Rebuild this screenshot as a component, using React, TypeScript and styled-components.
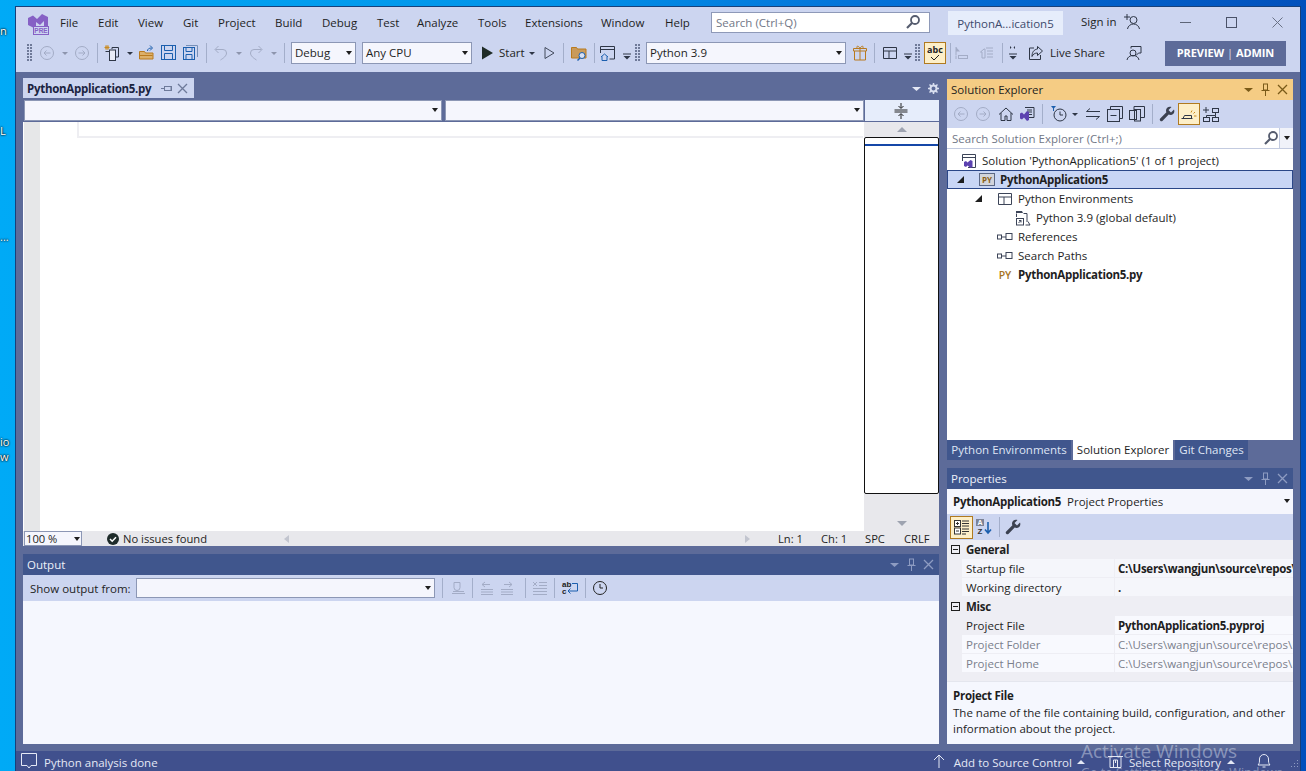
import React from "react";
import styled, { createGlobalStyle } from "styled-components";

const Global = createGlobalStyle`
  html, body { margin: 0; padding: 0; overflow: hidden; }
  body { font-family: "Open Sans", "Noto Sans", sans-serif; font-size: 11.5px; color: #1e1e1e; }
  * { box-sizing: border-box; }
  b { letter-spacing: -.28px; }
`;

const Root = styled.div`
  position: relative; width: 1306px; height: 771px; overflow: hidden;
  background: linear-gradient(90deg, #00aaf6 0%, #0094ea 40%, #0070d8 68%, #0050bc 100%);
  padding: 6px 5px 0 15px;
`;
const DesktopLabel = styled.span<{ $y: number }>`
  position: absolute; left: 0; top: ${p => p.$y}px; font-size: 11px; line-height: 13px; color: #fff;
  text-shadow: 0 0 2px #000, 0 0 2px #000;
`;
const Watermark = styled.div`
  position: absolute; left: 1081px; top: 739px; color: rgba(235, 240, 250, .42); font-size: 19px; line-height: 24px; pointer-events: none;
  white-space: nowrap;
  small { display: block; font-size: 12.5px; line-height: 18px; margin-top: 1px; }
`;
const Window = styled.div`
  height: 765px; border: 1px solid #16407a; border-bottom: none; background: #5d6b99; display: flex; flex-direction: column;
`;
const Chrome = styled.header`
  height: 65px; background: #ccd5f0; flex: none;
`;
const TitleRow = styled.div`
  height: 30px; display: flex; align-items: center; padding-left: 12px;
`;
const MenuItem = styled.span<{ $w: number }>`
  flex: none; width: ${p => p.$w}px; white-space: nowrap;
`;
const Logo = styled.svg`
  width: 21px; height: 22px; flex: none; margin-right: 11px; margin-top: 3px;
`;
const QuickSearch = styled.div`
  width: 219px; height: 21px; flex: none; background: #fff; border: 1px solid #8e99b8; display: flex; align-items: center; justify-content: space-between;
  padding: 0 8px 0 4px; color: #717786;
`;
const ProjectName = styled.div`
  margin-left: 18px; width: 115px; height: 24px; margin-top: 2px; flex: none; background: #e6edfb; color: #3d4a6c; display: flex; align-items: center; justify-content: center;
`;
const SignIn = styled.span`
  margin-left: 18px; width: 43px; flex: none; margin-top: -1px; white-space: nowrap;
`;
const WinButtons = styled.div`
  margin-left: auto; display: flex; flex: none;
`;
const WinButton = styled.div`
  width: 46px; height: 30px; display: flex; align-items: center; justify-content: center;
`;
const Toolbar = styled.div`
  height: 32px; display: flex; align-items: center; padding-left: 6px;
`;
const Slot = styled.div<{ $w: number }>`
  width: ${p => p.$w}px; flex: none; display: flex; align-items: center; height: 16px; white-space: nowrap;
`;
const IconSvg = styled.svg`
  width: 16px; height: 16px; flex: none; overflow: visible; display: block;
`;
const Sep = styled.i<{ $ml?: number }>`
  display: block; flex: none; width: 1px; height: 20px; background: #a3aeca; margin-left: ${p => p.$ml ?? 8}px;
`;
const Grip = styled.i`
  display: block; flex: none; width: 5px; height: 18px; margin-left: 5px;
  background-image: radial-gradient(circle at 1px 1px, #6f7a99 .8px, transparent 1px);
  background-size: 3px 3px;
`;
const Combo = styled.div<{ $w: number; $ml?: number; $h?: number }>`
  width: ${p => p.$w}px; height: ${p => p.$h ?? 22}px; margin-left: ${p => p.$ml ?? 0}px; flex: none; background: #f5f6fd; border: 1px solid #8c97b5;
  display: flex; align-items: center; justify-content: space-between; padding: 0 3px 1px 3px; color: #1e1e1e; white-space: nowrap;
`;
const Caret = styled.i`
  display: block; flex: none; width: 0; height: 0; border-left: 3.5px solid transparent; border-right: 3.5px solid transparent; border-top: 4px solid #1e1e1e;
`;
const ToolLabel = styled.span<{ $w: number }>`
  flex: none; width: ${p => p.$w}px; margin-top: -1px; white-space: nowrap;
`;
const ActiveTool = styled.div<{ $w?: number; $h?: number }>`
  width: ${p => p.$w ?? 22}px; height: ${p => p.$h ?? 22}px; flex: none; background: #fdefc8; border: 1px solid #b07a20; display: flex; flex-direction: column; align-items: center; justify-content: center;
  font-size: 9px; line-height: 8px; font-weight: 700; color: #222;
`;
const PreviewBadge = styled.div`
  margin-left: 23px; width: 121px; height: 25px; flex: none; background: #5d6b99; color: #fff; font-weight: 700; font-size: 11px; letter-spacing: -.1px; display: flex; align-items: center; justify-content: center; white-space: nowrap; padding-bottom: 1px;
  em { font-style: normal; font-weight: 400; padding: 0 3px; opacity: .8; }
`;

const Body = styled.main`
  flex: 1; min-height: 0; display: flex; padding: 0 7px 7px 7px; gap: 8px;
`;
const LeftColumn = styled.section`
  width: 916px; flex: none; display: flex; flex-direction: column;
`;
const TabStrip = styled.div`
  height: 28px; flex: none; display: flex; justify-content: space-between; padding-top: 6px;
`;
const DocTab = styled.div`
  width: 171px; height: 20px; background: #ccd5f0; display: flex; align-items: center; padding: 0 4px; font-weight: 700; letter-spacing: -.28px; color: #1a2340; white-space: nowrap;
  span { flex: 1; }
`;
const TabStripTools = styled.div`
  display: flex; align-items: center; height: 20px; gap: 2px; margin-right: -2px;
`;
const CombosBar = styled.div`
  height: 22px; flex: none; display: flex; background: #5d6b99;
  padding-left: 1px;
`;
const SplitButton = styled.div`
  flex: 1; height: 21px; margin-left: 1px; background: #e6edfb; display: flex; align-items: center; justify-content: center; padding-right: 2px; padding-top: 1px;
`;
const Editor = styled.div`
  height: 409px; flex: none; display: flex; background: #fff; padding-left: 1px;
`;
const Gutter = styled.div`
  width: 16px; flex: none; background: #e6e7e8;
`;
const Code = styled.div`
  flex: 1; padding-left: 37px;
`;
const CurrentLine = styled.div`
  height: 16px; margin-right: 1px; border: 2px solid #eeeef2; border-top: none; border-right: none;
`;
const MapColumn = styled.div`
  width: 75px; flex: none; background: #e8e8ec; display: flex; flex-direction: column; align-items: center;
`;
const MapArrow = styled.i<{ $up?: boolean }>`
  display: block; width: 0; height: 0; flex: none; border-left: 5px solid transparent; border-right: 5px solid transparent;
  ${p => p.$up ? "border-bottom: 5px solid #9ea3b0; margin-top: 5px;" : "border-top: 5px solid #9ea3b0; margin-top: 27px;"}
`;
const MapBox = styled.div`
  width: 75px; height: 357px; margin-top: 5px; background: #fff; border: 1px solid #111; border-radius: 2px; padding-top: 6px;
  &::before { content: ""; display: block; height: 2px; background: #1547a8; }
`;
const EditorStatus = styled.div`
  height: 15px; flex: none; background: #e8e8ec; display: flex; align-items: center; padding-left: 1px; font-size: 11.2px; white-space: nowrap;
`;
const ZoomCombo = styled.div`
  width: 58px; height: 15px; flex: none; background: #f5f6fd; border: 1px solid #8c97b5; display: flex; align-items: center; justify-content: space-between; padding: 0 1px 0 1px;
`;
const IssueIcon = styled.svg`
  width: 12px; height: 12px; margin-left: 25px; margin-right: 4px; flex: none;
`;
const ScrollTrack = styled.div`
  flex: 1; margin: 0 25px 0 74px; display: flex; justify-content: space-between; padding: 0 3px;
`;
const ScrollArrow = styled.i<{ $right?: boolean }>`
  display: block; width: 0; height: 0; border-top: 4px solid transparent; border-bottom: 4px solid transparent;
  ${p => p.$right ? "border-left: 5px solid #c2c5cf;" : "border-right: 5px solid #c2c5cf;"}
`;
const StatusCell = styled.span<{ $w: number }>`
  width: ${p => p.$w}px; flex: none;
`;
const Panel = styled.section<{ $h: number; $mt?: number }>`
  height: ${p => p.$h}px; margin-top: ${p => p.$mt ?? 0}px; flex: none; display: flex; flex-direction: column; background: #f5f7fe;
`;
const PanelTitle = styled.div<{ $active?: boolean }>`
  height: 21px; flex: none; display: flex; align-items: center; justify-content: space-between; padding: 0 3px 0 4px;
  background: ${p => p.$active ? "#f5cc84" : "#40568d"}; color: ${p => p.$active ? "#1e1e1e" : "#eef1f9"};
`;
const TitleTools = styled.div`
  display: flex; align-items: center; gap: 2px;
`;
const PanelGlyph = styled.svg`
  width: 15px; height: 15px; display: block; flex: none;
`;
const OutputBar = styled.div`
  height: 26px; flex: none; background: #ccd5f0; display: flex; align-items: center; padding-left: 7px;
`;
const OutputLabel = styled.span`
  width: 106px; flex: none; white-space: nowrap;
`;
const PanelFill = styled.div`
  flex: 1;
`;
const RightColumn = styled.section`
  width: 346px; flex: none; display: flex; flex-direction: column; padding-top: 7px;
`;
const SolutionBar = styled.div`
  height: 28px; flex: none; background: #ccd5f0; display: flex; align-items: center; padding-left: 6px;
`;
const SearchBox = styled.div`
  height: 21px; flex: none; background: #fff; border-bottom: 1px solid #c3cbe0; display: flex; align-items: center; padding: 0 0 0 5px; color: #717786; white-space: nowrap;
  span { flex: 1; }
`;
const SearchDrop = styled.div`
  width: 14px; height: 20px; flex: none; margin-left: 0; background: #f0f2f9; border-left: 1px solid #c3cbe0; display: flex; align-items: center; justify-content: center;
`;
const Tree = styled.div`
  flex: 1; background: #fff; padding-top: 2px;
`;
const TreeRow = styled.div<{ $pad: number; $selected?: boolean }>`
  height: 19px; display: flex; align-items: center; padding-left: ${p => p.$pad}px; white-space: nowrap;
  ${p => p.$selected ? "background: #c9d6f5; border: 1px solid #2b4788; margin-left: 0; padding-left: " + (p.$pad - 1) + "px;" : ""}
`;
const Expander = styled.div`
  width: 28px; flex: none; display: flex; align-items: center; padding-left: 6px;
`;
const ExpandArrow = styled.i`
  display: block; width: 0; height: 0; border-left: 7px solid transparent; border-bottom: 7px solid #1e1e1e;
`;
const TreeIcon = styled.div`
  width: 16px; height: 16px; flex: none; margin-right: 5px; display: flex; align-items: center; justify-content: center;
`;
const PyBadge = styled.span<{ $boxed?: boolean }>`
  font-size: 10.5px; line-height: 12px; font-weight: 600; color: #a8751f; letter-spacing: 0; display: block; text-align: center;
  ${p => p.$boxed ? "border: 1px solid #5c6885; background: #d2d4db; width: 16px; height: 13px; font-size: 8px; font-weight: 700; color: #8a5e14;" : ""}
`;
const TreeText = styled.span<{ $bold?: boolean }>`
  font-weight: ${p => p.$bold ? 700 : 400};
  letter-spacing: ${p => p.$bold ? "-.28px" : "0"};
  margin-top: ${p => p.$bold ? 0 : -1}px;
`;
const ToolTabs = styled.div`
  height: 20px; flex: none; display: flex; gap: 2px;
`;
const ToolTab = styled.div<{ $w: number; $active?: boolean }>`
  width: ${p => p.$w}px; flex: none; display: flex; align-items: center; justify-content: center; white-space: nowrap; padding-bottom: 2px;
  background: ${p => p.$active ? "#fff" : "#40568d"}; color: ${p => p.$active ? "#1e1e1e" : "#dfe5f5"};
`;
const PropCombo = styled.div`
  height: 25px; flex: none; background: #f5f6fd; display: flex; align-items: center; justify-content: space-between; padding: 0 3px 1px 6px; white-space: nowrap;
  b { margin-right: 6px; }
`;
const PropBar = styled.div`
  height: 26px; flex: none; background: #ccd5f0; display: flex; align-items: center; padding-left: 3px;
`;
const PropGrid = styled.div`
  height: 141px; flex: none; background: #eeeef4;
`;
const GroupRow = styled.div`
  height: 19px; display: flex; align-items: center; font-weight: 700; letter-spacing: -.28px; padding-left: 4px;
`;
const GroupBox = styled.i`
  display: block; width: 9px; height: 9px; margin-right: 6px; flex: none; border: 1px solid #1e1e1e; position: relative;
  &::after { content: ""; position: absolute; left: 1px; right: 1px; top: 3px; height: 1px; background: #1e1e1e; }
`;
const PropRow = styled.div<{ $dim?: boolean; $selected?: boolean }>`
  height: 19px; margin-left: 15px; display: grid; grid-template-columns: 152px 1fr; gap: 1px; white-space: nowrap; overflow: hidden;
  color: ${p => p.$dim ? "#7b7f8c" : "#1e1e1e"};
  border-bottom: 1px solid #eeeef4;
  & > span { padding-left: 4px; overflow: hidden; line-height: 19px; background: ${p => p.$dim ? "#f8f9fe" : "#f5f6fb"}; }
  & > span:first-child { ${p => p.$selected ? "background: #eeeef4;" : ""} }
  & > span:last-child { padding-left: 3px; ${p => p.$selected ? "background: #f8f9fe;" : ""} }
`;
const Description = styled.div`
  flex: 1; border-top: 1px solid #e4e6ee; padding: 6px 2px 0 6px; line-height: 16px; background: #f5f7fe;
  h4 { margin: 0 0 1px; font-size: 11.5px; font-weight: 700; letter-spacing: -.28px; line-height: 16px; }
  p { margin: 0; line-height: 16px; }
`;
const StatusBar = styled.footer`
  height: 20px; flex: none; background: #40508d; color: #e4e8f5; display: flex; align-items: center; padding-left: 5px; white-space: nowrap;
`;
const StatusText = styled.span<{ $ml?: number }>`
  margin-left: ${p => p.$ml ?? 0}px; flex: none; padding-top: 2px;
`;
const StatusRight = styled.div`
  margin-left: auto; display: flex; align-items: center;
`;
const UpCaret = styled.i<{ $ml: number; $mr: number }>`
  display: block; width: 0; height: 0; border-left: 4px solid transparent; border-right: 4px solid transparent; border-bottom: 4px solid #e4e8f5; margin: 2px ${p => p.$mr}px 0 ${p => p.$ml}px; flex: none;
`;
const ResizeGrip = styled.svg`
  width: 12px; height: 12px; margin-left: 17px; flex: none; margin-top: 6px;
`;

const G = "#a3acc6", D = "#2e3646", B = "#1b5fae", O = "#b97a1e";
type IP = { children: React.ReactNode };
const Ico = ({ children }: IP) => <IconSvg viewBox="0 0 16 16" fill="none" strokeWidth={1}>{children}</IconSvg>;

const Back = () => <Ico><circle cx="8" cy="8" r="6.5" stroke={G} /><path d="M11.5 8H5M7.5 5.5 5 8l2.5 2.5" stroke={G} /></Ico>;
const Fwd = () => <Ico><circle cx="8" cy="8" r="6.5" stroke={G} /><path d="M4.5 8H11M8.5 5.5 11 8l-2.5 2.5" stroke={G} /></Ico>;
const Dd = ({ c = D }: { c?: string }) => <Ico><path d="M5 7h6L8 10z" fill={c} /></Ico>;
const DdLine = () => <Ico><path d="M4 9h8" stroke={D} /><path d="M4.5 11h7L8 14.5z" fill={D} /></Ico>;
const NewProject = () => <Ico><path d="M3 0v5M.5 2.5h5M1 .7l4 3.6M5 .7 1 4.3" stroke="#c98a20" /><path d="M1.5 6.5h4v8" stroke={D} /><rect x="5.5" y="5" width="6" height="10.5" stroke={D} fill="#e8ebf6" /><path d="M8 4V2.500h6.500V12h-3" stroke={D} /></Ico>;
const OpenFolder = () => <Ico><path d="M.5 14V6.500h5l1 1.500h7.500v6z" fill="#dcb06a" stroke={O} /><path d="M.5 10.500h13" stroke={O} /><path d="M8.500 6c0-2 1.500-3 4-3M11 .5 13.500 3 11 5.500" stroke={B} /></Ico>;
const Save = () => <Ico><rect x=".5" y=".5" width="14" height="14" stroke={B} /><path d="M3.500.5v5h8v-5M3.500 14.500v-6h8v6" stroke={B} /></Ico>;
const SaveAll = () => <Ico><rect x=".5" y="2.500" width="11" height="12" stroke={B} /><path d="M3 2.500v4h6v-4M3 14.500v-5h6v5" stroke={B} /><path d="M3 .5h11.500V12" stroke="#7690b8" /></Ico>;
const Undo = () => <Ico><path d="M5.500 1 2 4.500 5.500 8M2.500 4.500H10a3.500 3.500 0 0 1 3.500 3.500c0 3-3 5-6 7" stroke={G} /></Ico>;
const Redo = () => <Ico><path d="M10.500 1 14 4.500 10.500 8M13.500 4.500H6A3.500 3.500 0 0 0 2.500 8c0 3 3 5 6 7" stroke={G} /></Ico>;
const Play = () => <Ico><path d="M3 1.500 14 8 3 14.500z" fill="#1f2c27" /></Ico>;
const PlayOutline = () => <Ico><path d="M4 2.500 13 8l-9 5.500z" stroke="#424a5c" /></Ico>;
const FolderSearch = () => <Ico><path d="M.5 13V2.500h5l1 1.500h8.500v9z" fill="#c99a5a" stroke={O} /><circle cx="11" cy="10.500" r="3" fill="#d8dff2" stroke={B} /><path d="M9 13 6.500 15.500" stroke={B} strokeWidth={1.500} /></Ico>;
const WindowHome = () => <Ico><path d="M.5 8V1.500h14V14h-5M.5 4.500h14" stroke={D} /><path d="M1 12 4.500 9 8 12M2 11.500v4h5v-4" stroke={B} /></Ico>;
const Gift = () => <Ico><path d="M2.500 6v9h11V6M1.500 3.500h13V6h-13zM8 3.500V15M5.500 3.500C3.500 1 6.500 0 8 3.500 9.500 0 12.500 1 10.500 3.500" stroke={O} /></Ico>;
const Layout = () => <Ico><path d="M1.500 2.500h13v11h-13zM1.500 6h13M7 6v7.500" stroke={D} /></Ico>;
const AlignA = () => <Ico><path d="M3 2 7 6.500H3z" fill={G} /><path d="M3 2v8" stroke={G} /><rect x="5.500" y="10.500" width="9" height="3" stroke={G} /><path d="M3 10.500V14" stroke={G} /></Ico>;
const AlignB = () => <Ico><path d="M7 3h7M8 6h6M8 9h6M8 12h6" stroke={G} /><path d="M5 4 1.500 7H3v6h3V4z" stroke={G} /></Ico>;
const MoreDd = () => <Ico><path d="M5 1v3l1.500-1.500zM10 1v3L8.500 2.500z" fill={D} /><path d="M4 9h8" stroke={D} /><path d="M4.500 11h7L8 14.500z" fill={D} /></Ico>;
const Share = () => <Ico><path d="M6 3H1.500v11.500h11V10" stroke={D} /><path d="M9.500 1.500 14.500 6l-5 4.500V8C7 8 5 9 4 11.500 4 7 6 4.500 9.500 4z" stroke={D} /></Ico>;
const Feedback = () => <Ico><circle cx="7" cy="8" r="3" stroke={D} /><path d="M1 15c.5-3 3-4.500 6-4.500s5.500 1.500 6 4.500" stroke={D} /><path d="M5 3.500V1.500h10V8h-2.500L10 10.500" stroke={D} /></Ico>;
const Glass = ({ c = "#555c6e" }: { c?: string }) => <Ico><circle cx="10" cy="6" r="4" stroke={c} strokeWidth={1.800} /><path d="M7 9l-5 5" stroke={c} strokeWidth={2.200} /></Ico>;
const AddUser = () => <Ico><path d="M3 0v6M0 3h6" stroke={D} /><circle cx="9.500" cy="6" r="3.500" stroke={D} /><path d="M3.500 15c.5-3 3-5 6-5s5.500 2 6 5" stroke={D} /></Ico>;
const Min = () => <Ico><path d="M3 8.500h11" stroke="#5d6577" /></Ico>;
const Max = () => <Ico><rect x="3.500" y="3.500" width="10" height="10" stroke="#4a5268" /></Ico>;
const Close = () => <Ico><path d="M3.500 3.500 13.500 13.500M13.500 3.500 3.500 13.500" stroke="#6a7286" /></Ico>;
const Home = () => <Ico><path d="M1 8.500 8 2l7 6.500M3 7v7.500h4V10h2v4.500h4V7" stroke={D} /></Ico>;
const VsDoc = () => <Ico><path d="M6 1.500h9v10H9M8 4h5M8 6h5M9 8.500h4" stroke={D} /><path d="M1 7.500 3 6.500l2 2 3-3.500 2 1v8l-2 1-3-3.500-2 2-2-1z" fill="#5c42b0" /></Ico>;
const Clock = () => <Ico><path d="M0 0h5L2.500 3z" fill={B} /><path d="M2.500 0v5" stroke={B} /><circle cx="9" cy="9" r="6" stroke={D} /><path d="M9 5.500V9h3" stroke={D} /></Ico>;
const Sync = () => <Ico><path d="M5 2.500 1.500 5.500H15M11 13.500l3.500-3H1" stroke={D} /></Ico>;
const Collapse = () => <Ico><path d="M3.500 3V.5h12v12H13" stroke={D} /><rect x=".5" y="3.500" width="12" height="12" stroke={D} /><path d="M3.500 9.500h6" stroke={D} /></Ico>;
const Copies = () => <Ico><path d="M5 4V.5h10.500v11H11" stroke={D} /><rect x=".5" y="4.500" width="7" height="9" stroke={D} /><rect x="5.500" y="3.500" width="6" height="11.500" stroke={D} /></Ico>;
const Wrench = () => <Ico><path d="M15 3.500 12 6.500 9.500 4 12.500 1C10 0 7 1.500 7 4.500c0 .8.2 1.300.4 1.800L1 12.700a1.700 1.700 0 0 0 2.400 2.300L9.700 8.600c.7.200 1.500.4 2.300.3 2.800-.3 4-3 3-5.400z" fill="#3b4150" /></Ico>;
const Iron = () => <Ico><path d="M.5 12.500h11M2 12.500 3.500 9.500h7v3" stroke={D} /><path d="M12.500 7.500l1.500-1.500M13 10h2.500M10 6.500l1-2" stroke="#c98a20" /></Ico>;
const TreeTool = () => <Ico><path d="M3 1v6M0 4h6" stroke={D} /><rect x="9.500" y="2.500" width="6" height="4" stroke={D} /><rect x=".5" y="11.500" width="6" height="4" stroke={D} /><rect x="9.500" y="11.500" width="6" height="4" stroke={D} /><path d="M12.500 7v2.500H3.500v2M12.500 9.500v2" stroke={D} /></Ico>;
const Category = () => <Ico><rect x="0.500" y="1.500" width="6" height="6" stroke="#333" fill="#fff" /><rect x="0.500" y="9" width="6" height="6" stroke="#333" fill="#fff" /><path d="M2 4.500h3M3.500 3v3M2 12h3M8 2h7M8 4.500h7M8 7h7M8 10h7M8 12.500h7M8 15h4" stroke="#333" /></Ico>;
const AlphaSort = () => <Ico><rect x="0" y="0" width="8" height="7" fill="#7c8397" /><text x="4" y="6" fontSize="7" fontWeight="700" fill="#fff" textAnchor="middle" fontFamily="Liberation Sans">A</text><text x="4" y="15" fontSize="8" fontWeight="700" fill="#333" textAnchor="middle" fontFamily="Liberation Sans">Z</text><path d="M12 3v11M9 10.500l3 3.500 3-3.500" stroke={B} strokeWidth={1.600} /></Ico>;
const OutA = () => <Ico><path d="M4 2.500h6v5a3 3 0 0 1-6 0zM3 11.500h11M2 13.500h13" stroke={G} /></Ico>;
const OutB = () => <Ico><path d="M6 2 3 4.500 6 7M3 4.500h8" stroke={G} /><path d="M2 9.500h12M2 12h12M2 14.500h12" stroke={G} /></Ico>;
const OutC = () => <Ico><path d="M10 2l3 2.500L10 7M13 4.500H5" stroke={G} /><path d="M2 9.500h12M2 12h12M2 14.500h12" stroke={G} /></Ico>;
const OutD = () => <Ico><path d="M1 2l4 4M5 2 1 6M7 2.500h8M7 5.500h8M1 8.500h14M1 11.500h14M1 14.500h14" stroke={G} /></Ico>;
const Wrap = () => <Ico><text x="0" y="7" fontSize="8" fontWeight="700" fill="#222" fontFamily="Liberation Sans">ab</text><text x="0" y="14" fontSize="8" fontWeight="700" fill="#222" fontFamily="Liberation Sans">c</text><path d="M10 3.500h5.500V11H6M8.500 8.500 6 11l2.500 2.500" stroke={B} /></Ico>;
const Clock2 = () => <Ico><circle cx="8" cy="8" r="6.500" stroke="#222" /><path d="M8 4v4h3" stroke="#222" /></Ico>;
const FileSolution = () => <Ico><path d="M1.500 8V1.500h13v13H7M1.500 4.500h13" stroke="#3c4458" /><path d="M3 9 5 8l1.500 1.500L9.500 7l2 1v6l-2 1-3-2.500L5 14l-2-1z" fill="#5c42b0" /></Ico>;
const EnvTable = () => <Ico><path d="M1.500 2.500h13v11h-13zM1.500 6h13M7 6v7.500" stroke="#3c4458" /></Ico>;
const PyEnv = () => <Ico><path d="M1 1h6l1 2H1z" fill="#3c4458" /><path d="M8.500 3.500H12V12M1.500 3.500V7" stroke="#3c4458" /><rect x="1.500" y="8.500" width="7" height="6.500" stroke="#3c4458" /><path d="M3.500 13 6 10.500M4 10.500h2v2M10.500 15H15L13 11.500" stroke="#3c4458" /></Ico>;
const Link = () => <Ico><rect x=".5" y="6" width="4" height="4" stroke="#3c4458" /><rect x="9" y="4.500" width="6" height="6" stroke="#3c4458" /><path d="M4.500 8H9" stroke="#3c4458" /></Ico>;
const ArrowDropLight = ({ c }: { c: string }) => <PanelGlyph viewBox="0 0 15 15"><path d="M3 6h9L7.500 10z" fill={c} /></PanelGlyph>;
const Pin = ({ c }: { c: string }) => <PanelGlyph viewBox="0 0 15 15" fill="none"><path d="M5 2h5M5.500 2v6h4V2M3.500 8.500h8M7.500 9v5" stroke={c} /></PanelGlyph>;
const SidePin = ({ c }: { c: string }) => <PanelGlyph viewBox="0 0 15 15" fill="none"><path d="M4 7.500H1M4.500 5v5M5 5.500h6v4H5M11.500 5v5" stroke={c} /></PanelGlyph>;
const Cross = ({ c }: { c: string }) => <PanelGlyph viewBox="0 0 15 15" fill="none"><path d="M3 3l9 9M12 3l-9 9" stroke={c} strokeWidth={1.300} /></PanelGlyph>;
const Gear = () => <PanelGlyph viewBox="0 0 15 15" fill="none"><circle cx="7.500" cy="7.500" r="3" stroke="#d9dff0" strokeWidth={2} /><path d="M7.500 2v2M7.500 11v2M2 7.500h2M11 7.500h2M3.500 3.500l1.500 1.500M10 10l1.500 1.500M3.500 11.500 5 10M10 5l1.500-1.500" stroke="#d9dff0" strokeWidth={1.500} /></PanelGlyph>;
const TitleButtons = ({ c }: { c: string }) => <TitleTools><ArrowDropLight c={c} /><Pin c={c} /><Cross c={c} /></TitleTools>;

const menus: [string, number][] = [["File", 38], ["Edit", 40], ["View", 45], ["Git", 35], ["Project", 57], ["Build", 47], ["Debug", 55], ["Test", 40], ["Analyze", 61], ["Tools", 47], ["Extensions", 76], ["Window", 64], ["Help", 46]];

export default function App() {
  return (
    <Root>
      <Global />
      <DesktopLabel $y={24}>n</DesktopLabel>
      <DesktopLabel $y={124}>L</DesktopLabel>
      <DesktopLabel $y={230}>...</DesktopLabel>
      <DesktopLabel $y={435}>io</DesktopLabel>
      <DesktopLabel $y={450}>w</DesktopLabel>
      <Window>
        <Chrome>
          <TitleRow>
            <Logo viewBox="0 0 21 22">
              <path d="M0 5 5 2.500 9 6 14 1 20 4v9h-4V8l-4 4-4-3v4l-3 1.500L0 12z" fill="#8661c5" />
              <rect x="5.500" y="13.500" width="15" height="8" fill="#ccd5f0" stroke="#8661c5" />
              <text x="13" y="20" fontSize="6.500" fontWeight="700" fill="#8661c5" textAnchor="middle" fontFamily="Liberation Sans">PRE</text>
            </Logo>
            {menus.map(([m, w]) => <MenuItem key={m} $w={w}>{m}</MenuItem>)}
            <QuickSearch>Search (Ctrl+Q)<Glass /></QuickSearch>
            <ProjectName>PythonA...ication5</ProjectName>
            <SignIn>Sign in</SignIn>
            <AddUser />
            <WinButtons>
              <WinButton><Min /></WinButton>
              <WinButton><Max /></WinButton>
              <WinButton><Close /></WinButton>
            </WinButtons>
          </TitleRow>
          <Toolbar>
            <Slot $w={17}><Grip /></Slot>
            <Slot $w={18}><Back /></Slot>
            <Slot $w={17}><Dd c="#8d95ad" /></Slot>
            <Slot $w={15}><Fwd /></Slot>
            <Slot $w={15}><Sep /></Slot>
            <Slot $w={18}><NewProject /></Slot>
            <Slot $w={17}><Dd /></Slot>
            <Slot $w={22}><OpenFolder /></Slot>
            <Slot $w={22}><Save /></Slot>
            <Slot $w={15}><SaveAll /></Slot>
            <Slot $w={15}><Sep /></Slot>
            <Slot $w={18}><Undo /></Slot>
            <Slot $w={17}><Dd c="#8d95ad" /></Slot>
            <Slot $w={18}><Redo /></Slot>
            <Slot $w={10}><Dd c="#8d95ad" /></Slot>
            <Slot $w={15}><Sep /></Slot>
            <Combo $w={65}>Debug<Caret /></Combo>
            <Combo $w={110} $ml={6}>Any CPU<Caret /></Combo>
            <Slot $w={7} />
            <Slot $w={20}><Play /></Slot>
            <ToolLabel $w={25}>Start</ToolLabel>
            <Slot $w={17}><Dd /></Slot>
            <Slot $w={14}><PlayOutline /></Slot>
            <Slot $w={16}><Sep /></Slot>
            <Slot $w={15}><FolderSearch /></Slot>
            <Slot $w={14}><Sep /></Slot>
            <Slot $w={19}><WindowHome /></Slot>
            <Slot $w={11}><DdLine /></Slot>
            <Slot $w={16}><Grip /></Slot>
            <Combo $w={200}>Python 3.9<Caret /></Combo>
            <Slot $w={6} />
            <Slot $w={14}><Gift /></Slot>
            <Slot $w={16}><Sep /></Slot>
            <Slot $w={18}><Layout /></Slot>
            <Slot $w={10}><DdLine /></Slot>
            <Slot $w={14}><Grip /></Slot>
            <Slot $w={18}><ActiveTool>abc<svg width="10" height="7" viewBox="0 0 10 7" fill="none"><path d="M1 3l3 3 5-5" stroke="#222" /></svg></ActiveTool></Slot>
            <Slot $w={11}><Sep /></Slot>
            <Slot $w={26}><AlignA /></Slot>
            <Slot $w={15}><AlignB /></Slot>
            <Slot $w={11}><Sep /></Slot>
            <Slot $w={23}><MoreDd /></Slot>
            <Slot $w={22}><Share /></Slot>
            <ToolLabel $w={76}>Live Share</ToolLabel>
            <Slot $w={16}><Feedback /></Slot>
            <PreviewBadge>PREVIEW<em>|</em>ADMIN</PreviewBadge>
          </Toolbar>
        </Chrome>
        <Body>
          <LeftColumn>
            <TabStrip>
              <DocTab><span>PythonApplication5.py</span><SidePin c="#6e7a9a" /><Cross c="#6e7a9a" /></DocTab>
              <TabStripTools><ArrowDropLight c="#e4e8f5" /><Gear /></TabStripTools>
            </TabStrip>
            <CombosBar>
              <Combo $w={418} $h={21}><span /><Caret /></Combo>
              <Combo $w={419} $h={21} $ml={3}><span /><Caret /></Combo>
              <SplitButton><IconSvg viewBox="0 0 16 16" fill="none"><path d="M1.500 7h13M1.500 9h13M8 0v5M8 16v-5M5.500 3 8 5.500 10.500 3M5.500 13 8 10.500 10.500 13" stroke="#222" /></IconSvg></SplitButton>
            </CombosBar>
            <Editor>
              <Gutter />
              <Code><CurrentLine /></Code>
              <MapColumn>
                <MapArrow $up />
                <MapBox />
                <MapArrow />
              </MapColumn>
            </Editor>
            <EditorStatus>
              <ZoomCombo>100 %<Caret /></ZoomCombo>
              <IssueIcon viewBox="0 0 12 12"><circle cx="6" cy="6" r="6" fill="#1e2b2a" /><path d="M3 6l2.200 2.200L9 4.200" stroke="#fff" strokeWidth={1.500} fill="none" /></IssueIcon>
              <span>No issues found</span>
              <ScrollTrack><ScrollArrow /><ScrollArrow $right /></ScrollTrack>
              <StatusCell $w={43}>Ln: 1</StatusCell>
              <StatusCell $w={44}>Ch: 1</StatusCell>
              <StatusCell $w={39}>SPC</StatusCell>
              <StatusCell $w={35}>CRLF</StatusCell>
            </EditorStatus>
            <Panel $h={190} $mt={8}>
              <PanelTitle>Output<TitleButtons c="#8e9cc2" /></PanelTitle>
              <OutputBar>
                <OutputLabel>Show output from:</OutputLabel>
                <Combo $w={299} $h={20}><span /><Caret /></Combo>
                <Slot $w={15}><Sep $ml={7} /></Slot>
                <Slot $w={14}><OutA /></Slot>
                <Slot $w={15}><Sep /></Slot>
                <Slot $w={20}><OutB /></Slot>
                <Slot $w={18}><OutC /></Slot>
                <Slot $w={15}><Sep /></Slot>
                <Slot $w={14}><OutD /></Slot>
                <Slot $w={16}><Sep /></Slot>
                <Slot $w={15}><Wrap /></Slot>
                <Slot $w={15}><Sep /></Slot>
                <Slot $w={16}><Clock2 /></Slot>
              </OutputBar>
              <PanelFill />
            </Panel>
          </LeftColumn>
          <RightColumn>
            <Panel $h={361}>
              <PanelTitle $active>Solution Explorer<TitleButtons c="#7a5a18" /></PanelTitle>
              <SolutionBar>
                <Slot $w={22}><Back /></Slot>
                <Slot $w={23}><Fwd /></Slot>
                <Slot $w={21}><Home /></Slot>
                <Slot $w={15}><VsDoc /></Slot>
                <Slot $w={17}><Sep /></Slot>
                <Slot $w={16}><Clock /></Slot>
                <Slot $w={18}><Dd /></Slot>
                <Slot $w={22}><Sync /></Slot>
                <Slot $w={22}><Collapse /></Slot>
                <Slot $w={15}><Copies /></Slot>
                <Slot $w={15}><Sep /></Slot>
                <Slot $w={19}><Wrench /></Slot>
                <Slot $w={25}><ActiveTool $h={22}><Iron /></ActiveTool></Slot>
                <Slot $w={16}><TreeTool /></Slot>
              </SolutionBar>
              <SearchBox><span>Search Solution Explorer (Ctrl+;)</span><Glass /><SearchDrop><Caret /></SearchDrop></SearchBox>
              <Tree>
                <TreeRow $pad={14}><TreeIcon><FileSolution /></TreeIcon><TreeText>Solution 'PythonApplication5' (1 of 1 project)</TreeText></TreeRow>
                <TreeRow $pad={4} $selected><Expander><ExpandArrow /></Expander><TreeIcon><PyBadge $boxed>PY</PyBadge></TreeIcon><TreeText $bold>PythonApplication5</TreeText></TreeRow>
                <TreeRow $pad={22}><Expander><ExpandArrow /></Expander><TreeIcon><EnvTable /></TreeIcon><TreeText>Python Environments</TreeText></TreeRow>
                <TreeRow $pad={68}><TreeIcon><PyEnv /></TreeIcon><TreeText>Python 3.9 (global default)</TreeText></TreeRow>
                <TreeRow $pad={50}><TreeIcon><Link /></TreeIcon><TreeText>References</TreeText></TreeRow>
                <TreeRow $pad={50}><TreeIcon><Link /></TreeIcon><TreeText>Search Paths</TreeText></TreeRow>
                <TreeRow $pad={50}><TreeIcon><PyBadge>PY</PyBadge></TreeIcon><TreeText $bold>PythonApplication5.py</TreeText></TreeRow>
              </Tree>
            </Panel>
            <ToolTabs>
              <ToolTab $w={124}>Python Environments</ToolTab>
              <ToolTab $w={100} $active>Solution Explorer</ToolTab>
              <ToolTab $w={73}>Git Changes</ToolTab>
            </ToolTabs>
            <Panel $h={276} $mt={8}>
              <PanelTitle>Properties<TitleButtons c="#8e9cc2" /></PanelTitle>
              <PropCombo><span><b>PythonApplication5</b>Project Properties</span><Caret /></PropCombo>
              <PropBar>
                <Slot $w={26}><ActiveTool $w={23} $h={23}><Category /></ActiveTool></Slot>
                <Slot $w={15}><AlphaSort /></Slot>
                <Slot $w={14}><Sep /></Slot>
                <Slot $w={16}><Wrench /></Slot>
              </PropBar>
              <PropGrid>
                <GroupRow><GroupBox />General</GroupRow>
                <PropRow><span>Startup file</span><span><b>C:\Users\wangjun\source\repos\PythonApplication5</b></span></PropRow>
                <PropRow><span>Working directory</span><span><b>.</b></span></PropRow>
                <GroupRow><GroupBox />Misc</GroupRow>
                <PropRow $selected><span>Project File</span><span><b>PythonApplication5.pyproj</b></span></PropRow>
                <PropRow $dim><span>Project Folder</span><span>C:\Users\wangjun\source\repos\PythonApplication5</span></PropRow>
                <PropRow $dim><span>Project Home</span><span>C:\Users\wangjun\source\repos\PythonApplication5</span></PropRow>
              </PropGrid>
              <Description>
                <h4>Project File</h4>
                <p>The name of the file containing build, configuration, and other information about the project.</p>
              </Description>
            </Panel>
          </RightColumn>
        </Body>
        <StatusBar>
          <svg width="16" height="16" viewBox="0 0 16 16" fill="none"><path d="M.5 .5h15v12H10L8 15l-2-2.500H.5z" stroke="#e4e8f5" /></svg>
          <StatusText $ml={7}>Python analysis done</StatusText>
          <StatusRight>
            <svg width="12" height="16" viewBox="0 0 12 16" fill="none"><path d="M6 15V2M1 7l5-5 5 5" stroke="#e4e8f5" /></svg>
            <StatusText $ml={9}>Add to Source Control</StatusText>
            <UpCaret $ml={5} $mr={23} />
            <svg width="15" height="15" viewBox="0 0 15 15" fill="none"><path d="M0 2.500h15M2 2.500v11h11v-11M5.500 13V6h4v7M7.500 6v3" stroke="#e4e8f5" /></svg>
            <StatusText $ml={6}>Select Repository</StatusText>
            <UpCaret $ml={6} $mr={22} />
            <svg width="14" height="16" viewBox="0 0 14 16" fill="none"><path d="M1 12c1.500-1.500 1.500-3 1.500-6a4.500 4.500 0 0 1 9 0c0 3 0 4.500 1.500 6zM5.500 14h3" stroke="#e4e8f5" /></svg>
            <ResizeGrip viewBox="3 0 12 12"><path d="M12 2h1v1h-1zM9 5h1v1H9zM12 5h1v1h-1zM6 8h1v1H6zM9 8h1v1H9zM12 8h1v1h-1z" fill="#8e9cc2" /></ResizeGrip>
          </StatusRight>
        </StatusBar>
      </Window>
      <Watermark>Activate Windows<small>Go to Settings to activate Windows.</small></Watermark>
    </Root>
  );
}
